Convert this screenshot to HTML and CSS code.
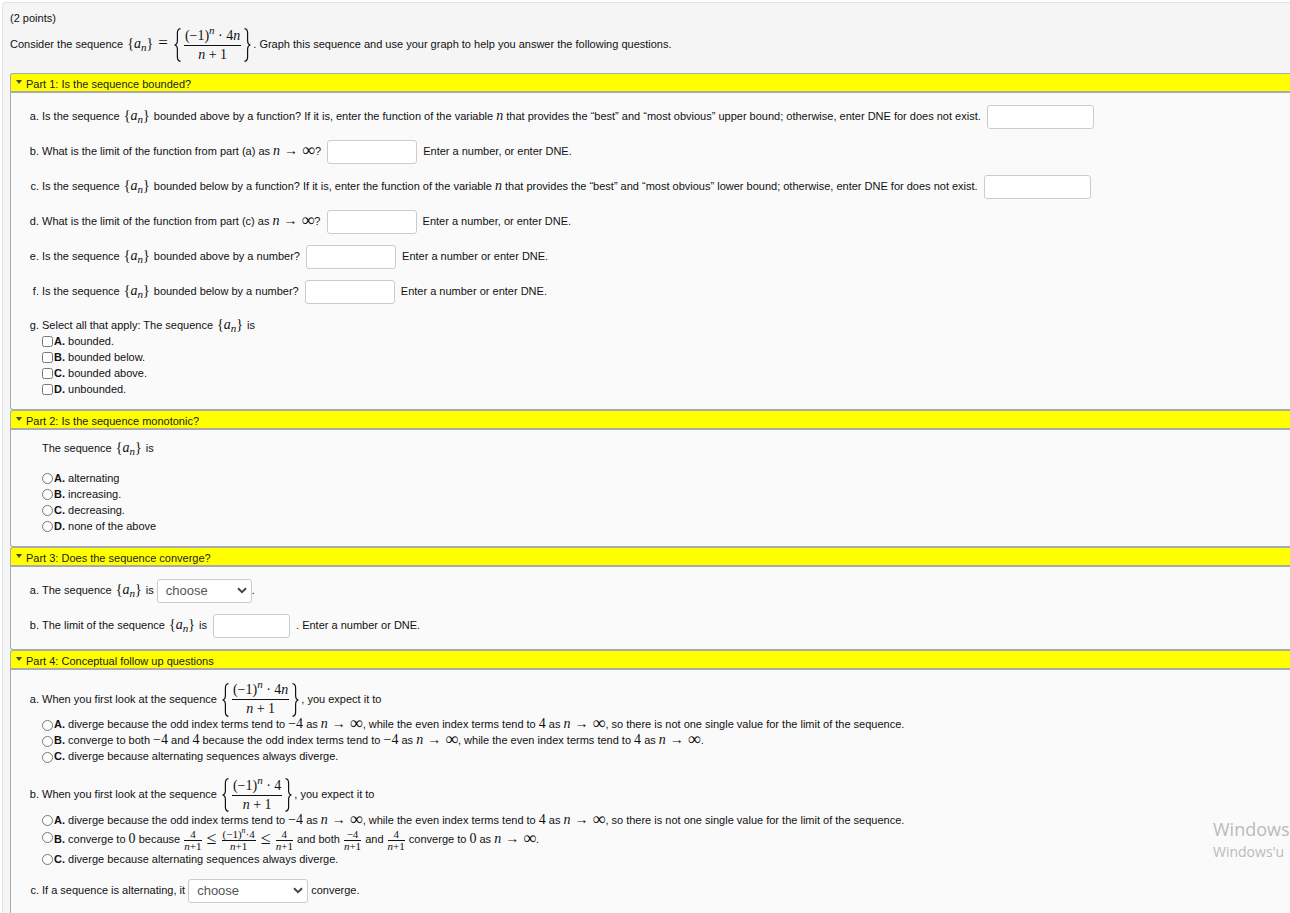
FILE: index.html
```html
<!DOCTYPE html>
<html lang="en">
<head>
<meta charset="utf-8">
<title>Sequences</title>
<link rel="stylesheet" href="styles.css">
</head>
<body>
<svg class="defs" aria-hidden="true">
  <symbol id="brace" viewBox="0 0 7 34"><path d="M6.500 .7C4 1 3.400 2.400 3.400 5v7.500C3.400 15.400 2.600 16.600 .6 17c2 .4 2.800 1.600 2.800 4.500V29c0 2.600.600 4 3.100 4.300" fill="none" stroke="currentColor" stroke-width="1.200"/></symbol>
</svg>
<main class="problem">
  <p class="points">(2 points)</p>
  <p class="intro">Consider the sequence <span class="math seq">{<i>a<sub>n</sub></i>}</span> <span class="math eq">=</span> <span class="set"><svg class="brace"><use href="#brace"/></svg><span class="frac"><span class="num">(−1)<sup>n</sup> · 4<i>n</i></span><span class="den"><i>n</i> + 1</span></span><svg class="brace close"><use href="#brace"/></svg></span>. Graph this sequence and use your graph to help you answer the following questions.</p>

  <section class="part">
    <h2><button type="button"><span class="caret"></span>Part 1: Is the sequence bounded?</button></h2>
    <div class="body">
      <ol>
        <li class="row"><label for="q1a">Is the sequence <span class="math seq">{<i>a<sub>n</sub></i>}</span> bounded above by a function? If it is, enter the function of the variable <i class="math">n</i> that provides the “best” and “most obvious” upper bound; otherwise, enter DNE for does not exist.</label> <input id="q1a" class="wide" type="text"></li>
        <li class="row"><label for="q1b">What is the limit of the function from part (a) as <span class="math lim"><i>n</i><span class="arrow">→</span><span class="inf">∞</span></span>?</label> <input id="q1b" type="text"> Enter a number, or enter DNE.</li>
        <li class="row"><label for="q1c">Is the sequence <span class="math seq">{<i>a<sub>n</sub></i>}</span> bounded below by a function? If it is, enter the function of the variable <i class="math">n</i> that provides the “best” and “most obvious” lower bound; otherwise, enter DNE for does not exist.</label> <input id="q1c" class="wide" type="text"></li>
        <li class="row"><label for="q1d">What is the limit of the function from part (c) as <span class="math lim"><i>n</i><span class="arrow">→</span><span class="inf">∞</span></span>?</label> <input id="q1d" type="text"> Enter a number, or enter DNE.</li>
        <li class="row"><label for="q1e">Is the sequence <span class="math seq">{<i>a<sub>n</sub></i>}</span> bounded above by a number?</label> <input id="q1e" type="text"> Enter a number or enter DNE.</li>
        <li class="row"><label for="q1f">Is the sequence <span class="math seq">{<i>a<sub>n</sub></i>}</span> bounded below by a number?</label> <input id="q1f" type="text"> Enter a number or enter DNE.</li>
        <li class="choices">Select all that apply: The sequence <span class="math seq">{<i>a<sub>n</sub></i>}</span> is
          <div class="options">
            <label><input type="checkbox"><span><b>A.</b> bounded.</span></label>
            <label><input type="checkbox"><span><b>B.</b> bounded below.</span></label>
            <label><input type="checkbox"><span><b>C.</b> bounded above.</span></label>
            <label><input type="checkbox"><span><b>D.</b> unbounded.</span></label>
          </div>
        </li>
      </ol>
    </div>
  </section>

  <section class="part">
    <h2><button type="button"><span class="caret"></span>Part 2: Is the sequence monotonic?</button></h2>
    <div class="body single">
      <p>The sequence <span class="math seq">{<i>a<sub>n</sub></i>}</span> is</p>
      <div class="options">
        <label><input type="radio" name="q2"><span><b>A.</b> alternating</span></label>
        <label><input type="radio" name="q2"><span><b>B.</b> increasing.</span></label>
        <label><input type="radio" name="q2"><span><b>C.</b> decreasing.</span></label>
        <label><input type="radio" name="q2"><span><b>D.</b> none of the above</span></label>
      </div>
    </div>
  </section>

  <section class="part">
    <h2><button type="button"><span class="caret"></span>Part 3: Does the sequence converge?</button></h2>
    <div class="body short">
      <ol>
        <li class="row"><label for="q3a">The sequence <span class="math seq">{<i>a<sub>n</sub></i>}</span> is</label> <span class="select"><select id="q3a"><option>choose</option></select><svg viewBox="0 0 10 7"><path d="M1 1.200l4 4 4-4" fill="none" stroke="currentColor" stroke-width="2"/></svg></span>.</li>
        <li class="row"><label for="q3b">The limit of the sequence <span class="math seq">{<i>a<sub>n</sub></i>}</span> is</label> <input id="q3b" class="narrow" type="text"> . Enter a number or DNE.</li>
      </ol>
    </div>
  </section>

  <section class="part last">
    <h2><button type="button"><span class="caret"></span>Part 4: Conceptual follow up questions</button></h2>
    <div class="body">
      <ol>
        <li class="formula">When you first look at the sequence <span class="set"><svg class="brace"><use href="#brace"/></svg><span class="frac"><span class="num">(−1)<sup>n</sup> · 4<i>n</i></span><span class="den"><i>n</i> + 1</span></span><svg class="brace close"><use href="#brace"/></svg></span>, you expect it to
          <div class="options">
            <label><input type="radio" name="q4a"><span><b>A.</b> diverge because the odd index terms tend to <span class="math">−4</span> as <span class="math lim"><i>n</i><span class="arrow">→</span><span class="inf">∞</span></span>, while the even index terms tend to <span class="math">4</span> as <span class="math lim"><i>n</i><span class="arrow">→</span><span class="inf">∞</span></span>, so there is not one single value for the limit of the sequence.</span></label>
            <label><input type="radio" name="q4a"><span><b>B.</b> converge to both <span class="math">−4</span> and <span class="math">4</span> because the odd index terms tend to <span class="math">−4</span> as <span class="math lim"><i>n</i><span class="arrow">→</span><span class="inf">∞</span></span>, while the even index terms tend to <span class="math">4</span> as <span class="math lim"><i>n</i><span class="arrow">→</span><span class="inf">∞</span></span>.</span></label>
            <label><input type="radio" name="q4a"><span><b>C.</b> diverge because alternating sequences always diverge.</span></label>
          </div>
        </li>
        <li class="formula">When you first look at the sequence <span class="set"><svg class="brace"><use href="#brace"/></svg><span class="frac"><span class="num">(−1)<sup>n</sup> · 4</span><span class="den"><i>n</i> + 1</span></span><svg class="brace close"><use href="#brace"/></svg></span>, you expect it to
          <div class="options">
            <label><input type="radio" name="q4b"><span><b>A.</b> diverge because the odd index terms tend to <span class="math">−4</span> as <span class="math lim"><i>n</i><span class="arrow">→</span><span class="inf">∞</span></span>, while the even index terms tend to <span class="math">4</span> as <span class="math lim"><i>n</i><span class="arrow">→</span><span class="inf">∞</span></span>, so there is not one single value for the limit of the sequence.</span></label>
            <label class="tall"><input type="radio" name="q4b"><span><b>B.</b> converge to <span class="math">0</span> because <span class="frac small"><span class="num">4</span><span class="den"><i>n</i>+1</span></span> <span class="math rel">≤</span> <span class="frac small"><span class="num">(−1)<sup>n</sup>·4</span><span class="den"><i>n</i>+1</span></span> <span class="math rel">≤</span> <span class="frac small"><span class="num">4</span><span class="den"><i>n</i>+1</span></span> and both <span class="frac small"><span class="num">−4</span><span class="den"><i>n</i>+1</span></span> and <span class="frac small"><span class="num">4</span><span class="den"><i>n</i>+1</span></span> converge to <span class="math">0</span> as <span class="math lim"><i>n</i><span class="arrow">→</span><span class="inf">∞</span></span>.</span></label>
            <label><input type="radio" name="q4b"><span><b>C.</b> diverge because alternating sequences always diverge.</span></label>
          </div>
        </li>
        <li class="row"><label for="q4c">If a sequence is alternating, it</label> <span class="select"><select id="q4c" class="long"><option>choose</option></select><svg viewBox="0 0 10 7"><path d="M1 1.200l4 4 4-4" fill="none" stroke="currentColor" stroke-width="2"/></svg></span> converge.</li>
      </ol>
    </div>
  </section>
</main>
<aside class="watermark"><div class="big">Windows</div><div>Windows'u</div></aside>
</body>
</html>
```
FILE: styles.css
```css
* { box-sizing: border-box; }
body {
  margin: 0;
  position: relative;
  overflow: hidden;
  font: 11px/16px "Liberation Sans", Arial, sans-serif;
  color: #111;
  background: #fff;
}
.defs { display: none; }
.problem {
  display: flex;
  flex-direction: column;
  min-height: 100vh;
  margin: 2px 0 0 2px;
  padding: 7px 0 0 7px;
  border: solid #e3e3e3;
  border-width: 1px 0 0 1px;
  border-radius: 4px 0 0 0;
  background: #f5f5f5;
}
p { margin: 0; }
.intro { line-height: 34px; margin: 1px 0 11px; }

.part h2 { margin: 0; font: inherit; }
.part h2 button {
  display: flex;
  align-items: center;
  width: 100%;
  height: 19px;
  padding: 3px 5px 0;
  border: solid #aaa;
  border-width: 1px 0 1px 1px;
  border-radius: 3px 0 0 0;
  background: #ff0;
  font: inherit;
  color: #222;
  text-align: left;
}
.caret {
  margin: 0 4px 3px 0;
  border: 3px solid transparent;
  border-top: 4px solid #444;
  border-bottom: 0;
}
.body {
  border: solid #aaa;
  border-width: 1px 0 1px 1px;
  border-radius: 0 0 0 3px;
  background: #fafafa;
  padding: 6px 0 12px 31px;
}
.body.short { padding-bottom: 6px; }
.body.single { padding-top: 10px; }
.single p { margin-bottom: 14px; }
.last { flex: 1; display: flex; flex-direction: column; }
.last .body { flex: 1; }

ol { margin: 0; padding: 0; list-style: lower-alpha; }
.row { line-height: 35px; }
.choices { padding-top: 8px; }
.formula { line-height: 32px; padding-top: 7px; }
.formula + .formula { padding-top: 14px; }
.formula + .row { margin-top: 6px; }

input[type="text"], select {
  height: 24px;
  border: 1px solid #ccc;
  border-radius: 3px;
  background: #fff;
  vertical-align: middle;
}
input[type="text"] { width: 90px; margin: 0 3px; }
input[type="text"].wide { width: 107px; }
input[type="text"].narrow { width: 77px; }
.select { display: inline-grid; align-items: center; vertical-align: middle; }
.select > * { grid-area: 1 / 1; }
.select svg { justify-self: end; width: 10px; height: 7px; margin-right: 5px; color: #444; pointer-events: none; }
select {
  appearance: none;
  width: 95px;
  padding: 0 8px;
  font: 13px "Liberation Sans", Arial, sans-serif;
  color: #555;
}
select.long { width: 120px; }

.options { display: flex; flex-direction: column; line-height: 16px; }
.options label { display: flex; align-items: center; }
.options input { width: 11px; height: 11px; margin: 2px 1px 0 0; flex: none; }
.options .tall { height: 23px; padding-top: 2px; }
.tall input { align-self: flex-start; }

.math, .frac { font-family: "Liberation Serif", serif; font-size: 14px; line-height: 1; }
.math sub, .frac sup { font-size: 11px; line-height: 0; font-style: italic; }
.math sub { vertical-align: -3px; }
.seq { margin: 0 1px; }
.arrow { margin: 0 4px; }
.inf { font-size: 18px; line-height: 0; vertical-align: -1px; }
.eq { margin: 0 1px; font-size: 17px; line-height: 0; }
.set { display: inline-flex; align-items: center; gap: 3px; margin: 0 2px; vertical-align: middle; }
.brace { width: 7px; height: 34px; margin: -1px 0; }
.close { transform: scaleX(-1); }
.frac {
  display: inline-flex;
  flex-direction: column;
  align-items: stretch;
  text-align: center;
  vertical-align: middle;
}
.num { padding: 0 1px 2px; border-bottom: 1px solid #111; }
.den { padding-top: 2px; }
.rel { font-size: 18px; line-height: 0; margin: 0 1px; vertical-align: -1px; }
.small { font-size: 11px; margin: 0 1px; }
.small .num { padding: 0 1px 0; }
.small .den { padding-top: 0; }
.small sup { font-size: 8px; }

.watermark {
  position: absolute;
  right: 0;
  bottom: 49px;
  width: 77px;
  white-space: nowrap;
  font: 14px/20px "Open Sans", sans-serif;
  color: #bbb;
}
.watermark { bottom: 59px; }
.watermark .big { font-size: 18px; line-height: 26px; }
```
